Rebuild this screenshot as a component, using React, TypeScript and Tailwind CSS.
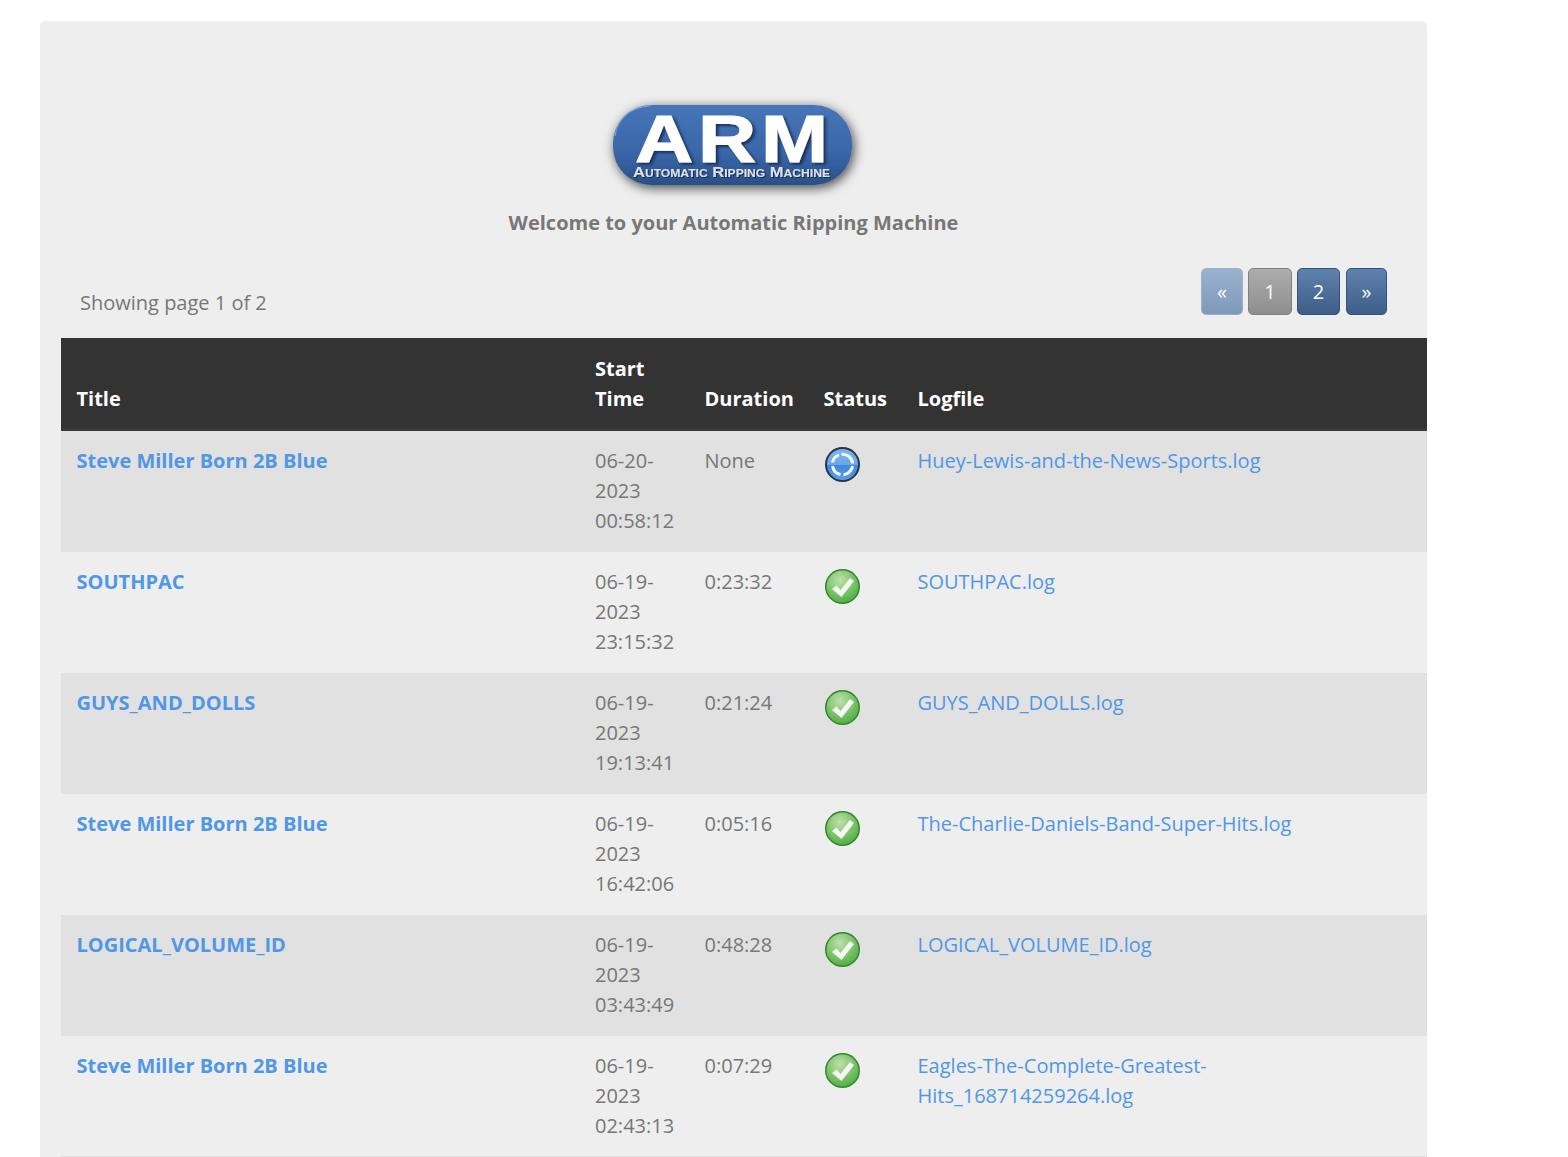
const jobs = [
  { title: "Steve Miller Born 2B Blue", date: "06-20-2023 00:58:12", duration: "None", status: "active", log: "Huey-Lewis-and-the-News-Sports.log" },
  { title: "SOUTHPAC", date: "06-19-2023 23:15:32", duration: "0:23:32", status: "success", log: "SOUTHPAC.log" },
  { title: "GUYS_AND_DOLLS", date: "06-19-2023 19:13:41", duration: "0:21:24", status: "success", log: "GUYS_AND_DOLLS.log" },
  { title: "Steve Miller Born 2B Blue", date: "06-19-2023 16:42:06", duration: "0:05:16", status: "success", log: "The-Charlie-Daniels-Band-Super-Hits.log" },
  { title: "LOGICAL_VOLUME_ID", date: "06-19-2023 03:43:49", duration: "0:48:28", status: "success", log: "LOGICAL_VOLUME_ID.log" },
  { title: "Steve Miller Born 2B Blue", date: "06-19-2023 02:43:13", duration: "0:07:29", status: "success", log: "Eagles-The-Complete-Greatest-Hits_168714259264.log" },
]

function Logo() {
  return (
    <svg width="270" height="104" viewBox="0 0 270 104" className="block">
      <defs>
        <linearGradient id="pill" x1="0" y1="0" x2="0" y2="1">
          <stop offset="0" stopColor="#4675b8" />
          <stop offset="0.6" stopColor="#3a66a8" />
          <stop offset="1" stopColor="#2a4f85" />
        </linearGradient>
        <filter id="pillShadow" x="-10%" y="-25%" width="120%" height="160%">
          <feDropShadow dx="2" dy="3" stdDeviation="6" floodColor="#000" floodOpacity="0.7" />
        </filter>
        <filter id="textShadow" x="-5%" y="-10%" width="115%" height="135%">
          <feDropShadow dx="2" dy="2" stdDeviation="1.2" floodColor="#0d2344" floodOpacity="0.8" />
        </filter>
        <filter id="subShadow" x="-5%" y="-20%" width="110%" height="150%">
          <feDropShadow dx="1" dy="1" stdDeviation="0.6" floodColor="#0d2344" floodOpacity="0.9" />
        </filter>
      </defs>
      <rect x="14" y="9" width="239" height="80" rx="38" fill="url(#pill)" filter="url(#pillShadow)" />
      <path d="M16 40 Q20 13 52 9.5" fill="none" stroke="#7fb2e6" strokeWidth="1.2" opacity="0.8" />
      <text transform="translate(36 66) scale(1.22 1)" letterSpacing="4" fontFamily="'Liberation Sans', sans-serif" fontWeight="700" fontSize="66" fill="#fff" stroke="#fff" strokeWidth="1" filter="url(#textShadow)">ARM</text>
      <text x="34" y="81" textLength="197" lengthAdjust="spacingAndGlyphs" fontFamily="'Liberation Sans', sans-serif" fontWeight="700" fontSize="15" fill="#dce2ea" filter="url(#subShadow)" style={{ fontVariant: "small-caps" }}>Automatic Ripping Machine</text>
    </svg>
  )
}

function ActiveIcon() {
  return (
    <svg width="37" height="37" viewBox="0 0 37 37" className="block">
      <defs>
        <linearGradient id="activeFill" x1="0" y1="0" x2="0" y2="1">
          <stop offset="0" stopColor="#7db4ee" />
          <stop offset="0.5" stopColor="#6aa6ea" />
          <stop offset="0.52" stopColor="#3f86dc" />
          <stop offset="1" stopColor="#5b9fe8" />
        </linearGradient>
      </defs>
      <circle cx="18.5" cy="18.5" r="17.5" fill="#26364a" />
      <circle cx="18.5" cy="18.5" r="15.5" fill="url(#activeFill)" />
      <path d="M8.5 16.5 A10.2 10.2 0 0 1 15 8.9 M17.5 8.2 A10.2 10.2 0 0 1 28.7 17.5 M28.6 20 A10.2 10.2 0 0 1 19.5 28.7 M16.5 28.5 A10.2 10.2 0 0 1 8.5 20" fill="none" stroke="#f2f7fd" strokeWidth="3" />
    </svg>
  )
}

function SuccessIcon() {
  return (
    <svg width="37" height="37" viewBox="0 0 37 37" className="mt-px block">
      <defs>
        <radialGradient id="okFill" cx="0.42" cy="0.3" r="0.8">
          <stop offset="0" stopColor="#bfe0ae" />
          <stop offset="0.55" stopColor="#7cc268" />
          <stop offset="1" stopColor="#47a83e" />
        </radialGradient>
      </defs>
      <circle cx="18.5" cy="18.5" r="17.5" fill="#2f8a2c" />
      <circle cx="18.5" cy="18.5" r="16" fill="url(#okFill)" />
      <path d="M8 21 L12.5 17.5 L16.5 22 L26 10 L30 13 L17.5 29 Z" fill="#f4f7f2" />
    </svg>
  )
}

const headCell = "pt-[16px] pr-4 pb-[14px] align-bottom text-left font-bold"
const bodyCell = "py-[15px] pr-4 align-top"

export default function App() {
  return (
    <div className="h-[1157px] overflow-hidden bg-white font-['Open_Sans',sans-serif] text-[20px] leading-[30px] text-[#777]">
      <div className="ml-10 mt-[21px] w-[1387px] rounded-t-[5px] bg-[#eeeeee] pb-10 pl-[21px]">
        <div className="flex flex-col items-center pt-[75px] pr-[21px]">
          <Logo />
          <p className="mt-[8px] font-bold">Welcome to your Automatic Ripping Machine</p>
        </div>
        <div className="mt-[30px] flex items-start justify-between pr-10 pl-[19px]">
          <p className="mt-[20px]">Showing page 1 of 2</p>
          <div className="flex gap-[5px] text-white">
            <span className="flex h-[47px] w-[42px] items-center justify-center rounded-[5px] border border-[#9db0c8] bg-gradient-to-b from-[#9ab2cf] to-[#7e99b9]">«</span>
            <span className="flex h-[47px] w-[44px] items-center justify-center rounded-[5px] border border-[#808080] bg-gradient-to-b from-[#adadad] to-[#8e8e8e]">1</span>
            <span className="flex h-[47px] w-[43px] items-center justify-center rounded-[5px] border border-[#34547f] bg-gradient-to-b from-[#5f82ac] to-[#3e5e88]">2</span>
            <span className="ml-px flex h-[47px] w-[41px] items-center justify-center rounded-[5px] border border-[#34547f] bg-gradient-to-b from-[#5f82ac] to-[#3e5e88]">»</span>
          </div>
        </div>
        <table className="mt-[20px] w-[1366px] table-fixed border-collapse">
          <colgroup>
            <col className="w-[518px]" />
            <col className="w-[109px]" />
            <col className="w-[119px]" />
            <col className="w-[94px]" />
            <col />
          </colgroup>
          <thead>
            <tr className="border-b-[3px] border-[#383838] bg-[#333333] text-white">
              <th className={`${headCell} pl-[15.5px]`}>Title</th>
              <th className={`${headCell} pl-4`}>Start Time</th>
              <th className={`${headCell} pl-[16.5px]`}>Duration</th>
              <th className={`${headCell} pl-[16.5px]`}>Status</th>
              <th className={`${headCell} pl-[16.5px]`}>Logfile</th>
            </tr>
          </thead>
          <tbody className="border-b border-[#dddddd]">
            {jobs.map((job, i) => (
              <tr key={i} className={i % 2 === 0 ? "bg-[#e1e1e1]" : "bg-[#eeeeee]"}>
                <td className={`${bodyCell} ${i === 0 ? "h-[122px]" : "h-[121px]"} pl-[15.5px] font-bold text-[#5097e6]`}>{job.title}</td>
                <td className={`${bodyCell} pl-4`}>{job.date}</td>
                <td className={`${bodyCell} pl-[16.5px]`}>{job.duration}</td>
                <td className={`${bodyCell} pl-[16.5px]`}>
                  {job.status === "active" ? <ActiveIcon /> : <SuccessIcon />}
                </td>
                <td className={`${bodyCell} pl-[16.5px] break-words text-[#5097e6]`}>{job.log}</td>
              </tr>
            ))}
          </tbody>
        </table>
      </div>
    </div>
  )
}
